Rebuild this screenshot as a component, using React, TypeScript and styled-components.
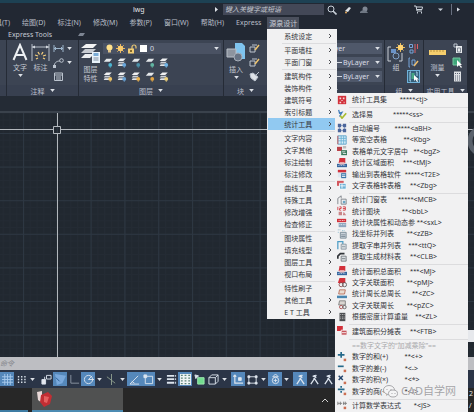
import React from "react";
import styled, { createGlobalStyle, css } from "styled-components";

const Global = createGlobalStyle`
  * { box-sizing: border-box; }
  html, body { margin: 0; padding: 0; background: #212830; }
  body, button, input, select {
    font-family: "Noto Sans", "Noto Sans CJK SC", sans-serif;
    font-size: 7px;
  }
  button { border: 0; padding: 0; margin: 0; background: none; color: inherit; cursor: pointer; }
  svg { display: block; flex: none; }
`;

const Shell = styled.div`
  position: relative;
  display: flex;
  flex-direction: column;
  min-height: 100vh;
  overflow: hidden;
  color: #c9ced6;
  background: #222833;
  border-top: 3px solid #1d4153;
`;

const TitleBar = styled.header`
  display: flex;
  align-items: center;
  height: 13px;
`;
const Side = styled.div`
  display: flex;
  align-items: center;
  width: 223px;
  padding-right: 4px;
`;
const DocName = styled.span`
  flex: 1;
  padding-left: 133px;
  font-size: 7px;
  line-height: 12px;
  color: #e2e5ea;
`;
const Search = styled.input`
  width: 101px;
  height: 11px;
  border: 0;
  padding: 0 2px;
  background: #434857;
  color: #d5d8de;
  font-style: italic;
  &::placeholder { color: #c3c7cf; opacity: 1; }
`;
const TitleTools = styled.div<{ $grow?: boolean }>`
  display: flex;
  align-items: center;
  gap: 7px;
  padding: 0 7px 0 3px;
  ${(p) => p.$grow && css`margin-left: auto; padding: 0 14px 0 0;`}
`;

const MenuBar = styled.nav`
  display: flex;
  align-items: center;
  height: 13px;
  gap: 12px;
  margin-left: -5px;
  white-space: nowrap;
`;
const MenuItem = styled.button`
  line-height: 11px;
  color: #b9bec8;
`;
const MenuRoot = styled.div`
  position: relative;
  margin-left: -6px;
`;
const OpenItem = styled.button`
  height: 12px;
  padding: 0 2px;
  background: #4b505d;
  color: #c9cdd5;
`;

const TabRow = styled.div`
  display: flex;
  align-items: center;
  height: 11px;
  gap: 26px;
  padding-left: 8px;
  line-height: 10px;
  color: #c5cad3;
`;

const Ribbon = styled.section`
  display: flex;
  gap: 1px;
  height: 56px;
  padding-right: 7px;
  background: #252b36;
`;
const Panel = styled.div<{ $w?: number }>`
  display: flex;
  flex-direction: column;
  background: #3c4453;
  ${(p) => (p.$w ? css`width: ${p.$w}px; flex: none;` : css`flex: 1;`)}
`;
const PanelBody = styled.div<{ $end?: boolean; $tight?: boolean }>`
  display: flex;
  flex: 1;
  gap: 3px;
  padding: 3px 4px 0 ${(p) => (p.$tight ? 2 : 5)}px;
  ${(p) => p.$end && css`justify-content: flex-end; padding-right: 2px;`}
`;
const PanelTitle = styled.button`
  display: flex;
  align-items: center;
  justify-content: center;
  gap: 5px;
  height: 11px;
  background: #384050;
  color: #b9bfca;
  white-space: nowrap;
`;
const Big = styled.button`
  display: flex;
  flex-direction: column;
  align-items: center;
  gap: 1px;
  line-height: 9px;
  white-space: nowrap;
  color: #c3c8d1;
`;
const Stack = styled.div`
  display: flex;
  flex-direction: column;
  gap: 3px;
`;
const Tool = styled.button<{ $on?: boolean }>`
  display: flex;
  align-items: center;
  gap: 3px;
  height: 11px;
  ${(p) => p.$on && css`background: #35607b; outline: 1px solid #6fb2da;`}
`;
const LayerTools = styled.div`
  display: grid;
  grid-template-columns: repeat(5, 14px);
  row-gap: 3px;
`;
const LayerBox = styled.button`
  display: flex;
  align-items: center;
  gap: 2px;
  height: 11px;
  width: 118px;
  padding: 0 2px;
  background: #4a5263;
  color: #d9dde4;
`;
const Push = styled.span`
  margin-left: auto;
`;
const Combo = styled.label`
  display: flex;
  align-items: center;
  width: 64px;
  height: 11px;
  padding-right: 2px;
  background: #4f586a;
`;
const Stroke = styled.i`
  width: 24px;
  border-top: 1px solid #d4d8df;
`;
const ComboSelect = styled.select`
  flex: 1;
  min-width: 0;
  height: 11px;
  padding: 0 0 0 1px;
  border: 0;
  appearance: none;
  background: none;
  color: #d9dde4;
`;

const DocStrip = styled.div`
  height: 17px;
  background: #242b35;
  border-bottom: 2px solid #3a424c;
`;
const Canvas = styled.main`
  position: relative;
  flex: 1;
  background: #212830;
`;
const Drawing = styled.svg`
  position: absolute;
  inset: 0;
  width: 100%;
  height: 100%;
`;
const CommandLine = styled.input`
  width: 100%;
  height: 13px;
  border: 0;
  padding: 0;
  background: #bdbec2;
  font-style: italic;
  &::placeholder { color: #85878c; opacity: 1; }
`;
const StatusBar = styled.div`
  display: flex;
  align-items: center;
  height: 18px;
  background: #2b3547;
`;
const Toggle = styled.button<{ $on?: boolean; $gap?: boolean }>`
  display: flex;
  align-items: center;
  justify-content: center;
  width: 14px;
  height: 14px;
  margin-left: ${(p) => (p.$gap ? 2 : 0)}px;
  background: ${(p) => (p.$on ? "#5588bb" : "transparent")};
`;
const Drop = styled.button`
  display: flex;
  justify-content: center;
  width: 9px;
`;
const TaskBar = styled.footer`
  display: flex;
  align-items: stretch;
  height: 24px;
  background: #272727;
`;
const StartApp = styled.button`
  width: 28px;
  margin-right: 4px;
  border-bottom: 2px solid #3e7ca3;
`;
const Task = styled.button`
  display: flex;
  align-items: center;
  width: 91px;
  padding-left: 4px;
  background: #505151;
  border-bottom: 2px solid #4c8bb2;
`;
const TrayButton = styled.button`
  margin-left: auto;
  margin-right: 145px;
`;

const menuSurface = css`
  margin: 0;
  list-style: none;
  background: #f1f1f2;
  color: #34353a;
  white-space: nowrap;
  z-index: 2;
`;
const Menu = styled.ul`
  ${menuSurface}
  position: absolute;
  left: 0;
  top: 12px;
  width: 70px;
  padding: 1px;
`;
const MenuEntry = styled.button<{ $on?: boolean }>`
  display: flex;
  align-items: center;
  justify-content: space-between;
  width: 100%;
  height: 12px;
  padding: 0 3px 0 16px;
  background: ${(p) => (p.$on ? "#91c9f1" : "none")};
`;
const Rule = styled.li<{ $h: number }>`
  height: ${(p) => p.$h}px;
  flex: none;
  &::before {
    content: "";
    display: block;
    height: ${(p) => (p.$h > 2 ? 2 : 1)}px;
    margin-left: 14px;
    border-bottom: 1px solid #dcdcde;
  }
`;
const SubMenu = styled.ul`
  ${menuSurface}
  position: absolute;
  left: 335px;
  top: 90px;
  bottom: 0;
  width: 133px;
  padding: 1px 0;
  display: flex;
  flex-direction: column;
`;
const SubItem = styled.li`
  flex: 1;
  min-height: 0;
  display: flex;
`;
const SubEntry = styled.button`
  display: flex;
  align-items: center;
  width: 100%;
  gap: 5px;
  padding-left: 2px;
  text-align: left;
`;
const Label = styled.span`
  display: flex;
  align-items: center;
  line-height: 11px;
  white-space: pre;
`;
const Stars = styled.span`
  font-family: "Liberation Sans", sans-serif;
  font-size: 8px;
`;
const Heading = styled.span`
  padding-left: 17px;
  line-height: 11px;
  color: #a9a9ac;
`;
const Watermark = styled.div`
  position: absolute;
  left: 383px;
  bottom: 13px;
  z-index: 3;
  display: flex;
  align-items: center;
  gap: 3px;
  font-size: 11px;
  line-height: 16px;
  color: #a3a3a6;
  text-shadow: 0 0 1px #fff;
  pointer-events: none;
  white-space: nowrap;
`;
const Clock = styled.div`
  position: absolute;
  left: 469px;
  bottom: 0;
  line-height: 12px;
  color: #e6e6e6;
`;
const EdgeButton = styled.button`
  position: absolute;
  left: 468px;
  bottom: 70px;
  width: 6px;
  height: 12px;
  background: #e6e8ec;
`;

const Caret = ({ side }: { side?: boolean }) => (
  <svg width="5" height="5" viewBox="0 0 5 5">
    <path d={side ? "M1 0l3 2.5L1 5z" : "M.2 1h4.6L2.5 4z"} fill="#dde1e7" />
  </svg>
);

const Sheets = ({ size = 11, mark = "#58a9c4", flat }: { size?: number; mark?: string; flat?: boolean }) => (
  <svg width={size} height={size} viewBox="0 0 12 12">
    {flat ? (
      <path d="M4 1h7L8 4.500H1z" fill="#e4e7ea" />
    ) : (
      <>
        <path d="M4 .5h6.500L7.500 3.500H.8z" fill="#f0f1f3" />
        <path d="M2.500 4.400h7L7.200 6.500H.8z" fill="#cdd1d7" />
        <path d="M2 7.400h7L7 9.500H.8z" fill="#dfe2e6" />
      </>
    )}
    <circle cx="8.700" cy="8.300" r="2.300" fill={mark} />
    <path d="M8.700 10v1.800" stroke={mark} />
  </svg>
);

const LayerProps = () => (
  <svg width="19" height="21" viewBox="0 0 19 21">
    <path d="M5 1h11l-4 4H0z" fill="#f2f3f4" />
    <path d="M4 6h11l-4 4H0z" fill="#c7cbd1" />
    <path d="M4 11h9l-4 4H0z" fill="#eceef0" />
    <rect x="11" y="9" width="8" height="11" fill="#e9f2fa" />
    <path d="M12.500 13h5v-3h-5z" fill="#79abd6" />
    <path d="M12.500 15h5M12.500 17h5" stroke="#7f8da0" />
  </svg>
);

const Bulb = () => (
  <svg width="9" height="10" viewBox="0 0 9 10">
    <circle cx="4.500" cy="3.500" r="3" fill="#ffe08a" />
    <path d="M3 6h3v2.500H3z" fill="#dfc38c" />
  </svg>
);
const Sun = () => (
  <svg width="9" height="9" viewBox="0 0 9 9">
    <path d="M4.500 0v9M0 4.500h9M1.300 1.300l6.400 6.400M7.700 1.300L1.300 7.700" stroke="#e9b45c" />
    <circle cx="4.500" cy="4.500" r="2.700" fill="#f9cc70" />
  </svg>
);
const Padlock = () => (
  <svg width="10" height="10" viewBox="0 0 10 10">
    <path d="M5 5V3a2 2 0 0 1 4 0v1.500" fill="none" stroke="#eac873" strokeWidth="1.200" />
    <rect x="1" y="4.500" width="6" height="5" fill="#f3cd73" />
    <rect x="3" y="6" width="2" height="2" fill="#82682e" />
  </svg>
);

const TextTool = () => (
  <svg width="16" height="19" viewBox="0 0 16 19">
    <path d="M1.500 17L8 2l6.500 15M4 12h8" fill="none" stroke="#edf0f3" strokeWidth="2" />
  </svg>
);
const DimBig = () => (
  <svg width="19" height="19" viewBox="0 0 19 19">
    <path d="M1 1v17M18 1v17M1 4h17" stroke="#b6bdc8" fill="none" />
    <path d="M1 4l3-1.500v3zM18 4l-3-1.500v3z" fill="#d4d9e0" />
    <path d="M5 16l2-1M4 12l3 1M7 9l1.500 2.500M12 9l-1.500 2.500M15 12l-3 1M14 16l-2-1" stroke="#f4ce7c" strokeWidth="1.300" />
  </svg>
);
const SmallTool = ({ kind }: { kind: string }) => (
  <svg width="11" height="11" viewBox="0 0 11 11" fill="none" stroke="#bcc4cf">
    {kind === "dim" && <path d="M1 2v7M10 2v7M1 5.500h9M3 4L1.500 5.500 3 7M8 4l1.500 1.500L8 7" stroke="#9db5cc" />}
    {kind === "leader" && <><path d="M1 9.500C1.500 6 3 4 7 4" /><circle cx="8.500" cy="3.500" r="1.800" /><path d="M0 8h3v3H0z" fill="#bcc4cf" stroke="none" /></>}
    {kind === "table" && <><path d="M1.500 2h8v7.500h-8z" /><path d="M1.500 4h8M3 6h5M3 8h5" /></>}
    {kind === "edit" && <><path d="M1 4h5v5H1zM3 2h5" /><path d="M6 7l4-5" stroke="#f0c56e" strokeWidth="1.500" /></>}
    {kind === "tag" && <path d="M1 3l3-1 5 4-3 4-4-3zM6 5l4-4" fill="#dfe3e8" />}
    {kind === "group1" && <><path d="M1.500 1.500h3v3h-3zM2 7h3v3H2z" stroke="#77a5db" /><path d="M7 1v9M9.500 1v5" stroke="#db6068" /></>}
    {kind === "group2" && <><path d="M2 1H1v9h1M4 3h3v5H4z" stroke="#77a5db" /><path d="M6 9l4-5" stroke="#eebd6a" strokeWidth="1.500" /></>}
    {kind === "group3" && <><path d="M3 1H2v9h1M8 1h1v4" stroke="#a9d6ef" /><path d="M3.500 2h3v6h-3z" fill="#48a884" stroke="none" /><path d="M6 4v6l1.500-1.500L9 11l1-.5-1-2h2z" fill="#fff" stroke="none" /></>}
    {kind === "pick" && <><path d="M2 1h3v3H2z" /><path d="M4 3h6v7H4z" fill="#e8ebee" stroke="none" /><path d="M5.500 5v4h3V5z" stroke="#858d98" /></>}
    {kind === "select" && <><path d="M1 1h7v7H1z" fill="#3fa67a" stroke="#74c6a1" /><path d="M5 3v7l2-2 2 3 1-1-2-2h2z" fill="#fff" stroke="none" /></>}
    {kind === "calc" && <><path d="M2 .5h7v10H2z" fill="#dde0e4" stroke="none" /><path d="M3 2.500h5M3 5h5M3 7h5M3 9h5" stroke="#596170" strokeDasharray="1 1" /></>}
  </svg>
);

const Insert = () => (
  <svg width="20" height="21" viewBox="0 0 20 21">
    <path d="M9 0h7l3 3v13H9z" fill="#7fc4ef" />
    <path d="M1 6h9v8H1z" fill="#8d949f" stroke="#b9bfc8" />
    <circle cx="12" cy="14" r="4" fill="#687384" stroke="#a6aeb9" />
  </svg>
);
const GroupIcon = () => (
  <svg width="18" height="19" viewBox="0 0 18 19" fill="none">
    <path d="M4 4H1v14h3M12 18h3v-8" stroke="#c9ced6" />
    <rect x="4" y="6" width="5" height="4" fill="#6b93c8" />
    <circle cx="9" cy="13" r="3" stroke="#7fa1c8" />
    <path d="M13.500 0v9M9 4.500h9M10.500 1.500l6 6M16.500 1.500l-6 6" stroke="#e8b95b" />
    <circle cx="13.500" cy="4.500" r="2.700" fill="#ffd575" />
  </svg>
);
const Ruler = () => (
  <svg width="17" height="19" viewBox="0 0 17 19">
    <rect y="7" width="17" height="5" fill="#f5ce6d" />
    <path d="M2 7v2M5 7v2M8 7v2M11 7v2M14 7v2" stroke="#bd9540" />
  </svg>
);

const statusShapes: Record<string, React.ReactNode> = {
  grid: <path d="M3 0v12M6 0v12M9 0v12M0 3h12M0 6h12M0 9h12" stroke="#a9cbee" />,
  dots: <path d="M2 3h9M2 6h9M2 9h9" strokeDasharray="1.500 2" strokeWidth="1.500" />,
  infer: <><path d="M6 1.500h5v4H6z" /><path d="M1 6h4v5H1z" fill="#e6e9ee" /><path d="M4 6V3" /></>,
  dyn: <><path d="M0 0l12 2-4 8-6 2z" fill="#7aa9dc" stroke="none" /><path d="M1 4l4 4" stroke="#24588f" /></>,
  ortho: <path d="M2 1v9h9" stroke="#8d97a5" />,
  polar: <><circle cx="6" cy="6" r="4.500" /><path d="M6 6h6M6 6l4-4" /></>,
  iso: <path d="M1 3l9 7M6 0v12" stroke="#8fa08f" />,
  track: <path d="M1 11h10M1 11L10 2M3 8l3 2" />,
  snap: <><path d="M2.500 2.500h8v8h-8z" /><path d="M1 1h3v3H1z" fill="#d4e5f6" /></>,
  weight: <path d="M1 2h10M1 5.500h10M1 9.500h10" strokeWidth="2" strokeDasharray="8 1" />,
  checker: <><path d="M0 0h12v12H0z" fill="#eef3f4" stroke="none" /><path d="M1 1.500h10M1 4.500h10M1 7.500h10M1 10.500h10" stroke="#5d8479" strokeWidth="1.500" strokeDasharray="2 2" /></>,
  cycle: <><path d="M4 4h7v7H4z" fill="#72dd8f" stroke="#9fe9b2" /><path d="M1 1l4 1-3 3z" fill="#dfe5ec" /></>,
  cube: <path d="M1 4h7v7H1zM1 4l3-3h7v7l-3 3M8 4l3-3" />,
  ucs: <><path d="M2 1v9h9M2 1L.5 3M2 1l1.500 2" strokeWidth="1.300" /><path d="M6 4h3v3H6z" fill="#dceaf7" /></>,
  box: <><path d="M2 3h8v7H2z" /><path d="M1 2h2v2H1zM9 2h2v2H9zM1 9h2v2H1zM9 9h2v2H9z" fill="#e6e9ee" /></>,
  gizmo: <><circle cx="6" cy="7" r="3.500" /><path d="M6 0l3 3H3zM6 5v4M4 7h4" /></>,
  anno: <path d="M6 1v4L2 11M6 5l4 6M4 2l4 2M8 1L5 5" strokeWidth="1.400" />,
};

const StatusIcon = ({ kind }: { kind: string }) => (
  <svg width="11" height="11" viewBox="0 0 12 12" fill="none" stroke="#dce4ed">
    {statusShapes[kind]}
  </svg>
);

const status: [string, string, boolean?, boolean?, boolean?][] = [
  ["grid", "栅格", true],
  ["dots", "捕捉", false, true],
  ["infer", "推断约束", false, false, true],
  ["dyn", "动态输入", true],
  ["ortho", "正交"],
  ["polar", "极轴追踪", true, true],
  ["iso", "等轴测草图", false, true],
  ["track", "对象捕捉追踪", true],
  ["snap", "对象捕捉", true, true],
  ["weight", "线宽"],
  ["checker", "透明度", true],
  ["cycle", "选择循环"],
  ["cube", "三维对象捕捉", false, true],
  ["ucs", "动态 UCS", true, false, true],
  ["box", "选择过滤", false, true],
  ["gizmo", "小控件", true, true],
  ["anno", "注释可见性", true, false, true],
  ["anno", "自动缩放"],
  ["anno", "注释比例"],
];

const menuGroups = [
  ["系统设定"],
  ["平面墙柱", "平面门窗"],
  ["建筑构件", "装饰构件", "建筑符号", "索引标题", "统计工具"],
  ["文字内容", "文字其他", "标注绘制", "标注修改"],
  ["曲线工具", "特殊工具", "修改增强", "检查修正"],
  ["图块属性", "填充线型", "图层工具", "视口布局"],
  ["特性刷子", "其他工具", " E T 工具"],
];

type Cmd = { icon: string; name: string; pad: number; stars: number; code: string };
const c = (icon: string, name: string, pad: number, stars: number, code: string): Cmd => ({ icon, name, pad, stars, code });
const cmdGroups: Cmd[][] = [
  [c("set", "统计工具集", 7, 5, "<tj>")],
  [c("pick", "选择易", 11, 5, "<ss>")],
  [
    c("nodes", "自动编号", 8, 5, "<aBH>"),
    c("table", "等宽空表格", 9, 2, "<Kbg>"),
    c("cell", "表格单元文字居中", 3, 2, "<bgZ>"),
    c("area", "统计区域面积", 5, 3, "<tMJ>"),
    c("export", "输出到表格软件", 2, 5, "<T2E>"),
    c("swap", "文字表格转表格", 5, 2, "<Zbg>"),
  ],
  [
    c("door", "统计门窗表", 6, 5, "<MCB>"),
    c("num", "统计图块", 12, 2, "<bbL>"),
    c("numTable", "统计块属性和动态参", 1, 2, "<sxL>"),
    c("coord", "找坐标并列表", 7, 2, "<zZB>"),
    c("blueList", "提取字串并列表", 4, 3, "<ttQ>"),
    c("list", "提取生成材料表", 5, 2, "<CLB>"),
  ],
  [
    c("area", "统计面积总面积", 5, 3, "<MJ>"),
    c("link", "文字关联面积", 7, 2, "<pMJ>"),
    c("perim", "统计周长总周长", 6, 2, "<ZC>"),
    c("linkGray", "文字关联周长", 7, 2, "<pZC>"),
    c("calc", "根据密度计算重量", 4, 2, "<ZL>"),
  ],
  [c("share", "建筑面积分摊表", 5, 2, "<FTB>")],
  [
    c("", "==数字文字的“加减乘除”==", 0, 0, ""),
    c("plus", "数字的和(+)", 9, 2, "<+>"),
    c("minus", "数字的差(-)", 10, 1, "<->"),
    c("times", "数字的积(×)", 9, 1, "<*>"),
    c("divide", "数字的商(÷)", 9, 1, "</>"),
  ],
  [c("expr", "计算数学表达式", 7, 1, "<JS>")],
];

const red = "#d2303a";
const cmdShapes: Record<string, React.ReactNode> = {
  set: <><path d="M1 1h10v10H1z" fill={red} /><path d="M3 3h2v2H3zM7 3h2v2H7zM5 6h2v1H5zM3 8h2v2H3zM8 8h1v2H8z" fill="#f6d7d8" /></>,
  pick: <><path d="M2 1l1 4 3-1-3 5" stroke="#3a77b8" fill="none" strokeWidth="1.500" /><path d="M4 8l2 3 5-6" stroke="#a6bb2f" fill="none" strokeWidth="2" /></>,
  nodes: <><path d="M2 3h8M2 9h8M3 2v8M9 2v8" stroke="#8aa0c6" /><path d="M1 1h4v4H1zM7 1h4v4H7zM1 7h4v4H1zM7 7h4v4H7z" fill="#4c669b" /></>,
  table: <><path d="M1 1h10v10H1z" fill="#d9eef9" stroke="#4c9ac4" /><path d="M1 4h10M1 7h10M5 1v10M8 1v10" stroke="#64aed2" /><path d="M1 1v10" stroke="#d9534f" /></>,
  cell: <><path d="M0 1h6v5H0z" fill="#bb4148" /><path d="M5 5h7v6H5z" fill="#39795c" /><path d="M1 8l4 1M6 7h4M7 9h4" stroke="#eee" /><path d="M7 0h4v3H7z" fill="#bbb" /></>,
  area: <><path d="M3 0h7v6H2z" fill={red} /><path d="M0 7h12v4H0z" fill="#35669f" /><path d="M3 5h6v3H3z" fill="#e8bfc2" /><path d="M1 9h10" stroke="#ccd9e8" strokeDasharray="1 1" /></>,
  export: <><path d="M1 1h10v9H1z" fill="#dfe6ee" /><path d="M1 1h10v3H1z" fill={red} /><path d="M5 5h6v6H5z" fill="#3c76a8" /><path d="M6 7h4M6 9h4" stroke="#fff" /></>,
  swap: <><path d="M0 1h8v6H0z" fill="#d3575d" /><path d="M3 4h8v7H3z" fill="#6eb1d6" stroke="#fff" /><path d="M4 7h6M6 5v5" stroke="#fff" /></>,
  door: <><path d="M1 11V4l4-3v3M5 11V5h6v6z" fill="none" stroke="#737981" /><path d="M7 7h3v3H7z" fill="#6ba5c4" /></>,
  num: <><path d="M1 1v4M3 1h2v2H3v2h2M7 1h3v4H7M7 3h3" stroke={red} fill="none" /><path d="M2 7h4v4H2zM8 7l3 4H7z" fill="#c98588" /></>,
  numTable: <><path d="M0 1h11v4H0z" fill={red} /><path d="M2 6h9v5H2z" fill="#8ea6be" /><path d="M2 3h8M3 8h8" stroke="#fff" strokeDasharray="1 1" /></>,
  coord: <><path d="M1 1h3M1 4h2M6 2h4" stroke="#6dabc4" strokeDasharray="1 1" /><path d="M4 4h7v7H4z" fill="#c9d1d8" stroke="#758592" /><path d="M5 7h5M5 9h5" stroke="#758592" /></>,
  blueList: <><path d="M1 11V2h6v3" fill="none" stroke="#4e9ec6" strokeWidth="1.500" /><path d="M5 5h6v6H5z" fill="#d8dde1" stroke="#84919b" /><path d="M6 8h4" stroke="#84919b" /></>,
  list: <><path d="M1 8V5l3-3h5" fill="none" stroke="#313438" strokeWidth="2" /><path d="M5 5h6v6H5z" fill="#d8dde1" stroke="#6f7378" /><path d="M6 8h4" stroke="#6f7378" /></>,
  link: <><path d="M3 0h7v6H1z" fill={red} /><circle cx="5" cy="8" r="2.500" fill="none" stroke="#844" /><circle cx="9" cy="8" r="2.500" fill="none" stroke="#555" /></>,
  perim: <><path d="M3 1h7l-1 5H2z" fill="#e9ddd2" stroke="#b3654f" /><path d="M0 8h12v3H0z" fill="#4a87b0" /></>,
  linkGray: <><path d="M3 1h7v5H2z" fill="#d9d5d0" stroke="#777" /><circle cx="5" cy="8.500" r="2" fill="none" stroke="#a44" /><circle cx="9" cy="8.500" r="2" fill="none" stroke="#555" /></>,
  calc: <><path d="M3 1h7v10H3z" fill="#4d4f52" /><path d="M4 3h5M4 6h5M4 8h5" stroke="#d7d7d7" strokeDasharray="1 1" /></>,
  share: <><path d="M0 0h7v6H0z" fill={red} /><path d="M5 5h7v6H5z" fill="#c5565c" stroke="#fff" /><path d="M6 8h5" stroke="#fff" /></>,
  plus: <path d="M5 0v7M1 3.500h8" stroke="#25698a" strokeWidth="2" />,
  minus: <path d="M1 4h7" stroke="#25698a" strokeWidth="2" />,
  times: <path d="M2 1l5 5M7 1L2 6" stroke="#24466f" strokeWidth="1.800" />,
  divide: <path d="M1 4h8M5 0v2M5 6v2" stroke="#25698a" strokeWidth="2" />,
  expr: <path d="M1 2v4M4 2v4M1 4h5M8 2v4M10 2v4M7 4h5" stroke="#777" />,
};
const dotted = ["plus", "minus", "times", "divide", "expr"];
const CmdIcon = ({ kind }: { kind: string }) => (
  <svg width="10" height="10" viewBox="0 0 12 12">
    {cmdShapes[kind]}
    {dotted.includes(kind) && <path d="M8 8h3v3H8z" fill="#cc6f52" />}
  </svg>
);

const Chevron = () => (
  <svg width="5" height="6" viewBox="0 0 5 6">
    <path d="M1 1l2 2-2 2" fill="none" stroke="#4a4b50" />
  </svg>
);

const Title = ({ children }: { children: string }) => (
  <PanelTitle>{children}<Caret /></PanelTitle>
);

export default function App() {
  return (
    <Shell>
      <Global />
      <TitleBar>
        <Side><DocName>lwg</DocName><Caret side /></Side>
        <Search aria-label="搜索" placeholder="键入关键字或短语" />
        <TitleTools>
          <svg width="10" height="10" viewBox="0 0 10 10" fill="none" stroke="#c9d0d9">
            <circle cx="4" cy="4" r="3" /><path d="M6 6l3.500 3.500" strokeWidth="1.600" />
          </svg>
          <svg width="8" height="8" viewBox="0 0 8 8"><path d="M1 5l4-4 2 1-3 4z" fill="#dfe3e8" /><circle cx="2" cy="6.500" r="1" fill="#e6aa5b" /></svg>
          <svg width="10" height="8" viewBox="0 0 10 8"><circle cx="6" cy="3" r="2.500" fill="#7f8793" /><path d="M1 6c2-3 7-2 8 1H1z" fill="#6f7783" /></svg>
        </TitleTools>
        <TitleTools $grow>
          <svg width="9" height="9" viewBox="0 0 9 9" fill="none" stroke="#c9d0d9"><path d="M0 1h2l1 5h5M2 2h6.500L8 4.500H3" /><path d="M3 7h1v1.500H3zM7 7h1v1.500H7z" fill="#c9d0d9" stroke="none" /></svg>
          <svg width="14" height="5" viewBox="0 0 14 5"><path d="M8 1.500h5L10.500 4z" fill="#c9d0d9" /></svg>
          <svg width="9" height="11" viewBox="0 0 9 11"><path d="M.5 0v11" stroke="#687080" /><path d="M6 3.500l3 2-3 2z" fill="#d9dde4" /></svg>
        </TitleTools>
      </TitleBar>
      <MenuBar>
        {["具(T)", "绘图(D)", "标注(N)", "修改(M)", "参数(P)", "窗口(W)", "帮助(H)", "Express"].map((m) => (
          <MenuItem key={m}>{m}</MenuItem>
        ))}
        <MenuRoot>
          <OpenItem aria-expanded="true">源泉设计</OpenItem>
          <Menu>
            {menuGroups.map((g, i) => (
              <React.Fragment key={i}>
                {i > 0 && <Rule $h={2} />}
                {g.map((name) => (
                  <li key={name}><MenuEntry $on={name === "统计工具"}>{name}<Chevron /></MenuEntry></li>
                ))}
              </React.Fragment>
            ))}
          </Menu>
        </MenuRoot>
      </MenuBar>
      <TabRow>
        <span>Express Tools</span>
        <svg width="7" height="5" viewBox="0 0 7 5"><path d="M0 4l2-3h5L5 4z" fill="#7d8592" /></svg>
      </TabRow>
      <Ribbon>
        <Panel $w={6}><PanelBody /><PanelTitle aria-label="绘图" /></Panel>
        <Panel $w={71}>
          <PanelBody>
            <Big><TextTool />文字<Caret /></Big>
            <Big><DimBig />标注</Big>
            <Stack>
              <Tool aria-label="线性"><SmallTool kind="dim" /><Caret /></Tool>
              <Tool aria-label="引线"><SmallTool kind="leader" /><Caret /></Tool>
              <Tool aria-label="表格"><SmallTool kind="table" /></Tool>
            </Stack>
          </PanelBody>
          <Title>注释</Title>
        </Panel>
        <Panel $w={144}>
          <PanelBody $tight>
            <Big><LayerProps /><span>图层<br />特性</span></Big>
            <Stack>
              <LayerBox><Bulb /><Sun /><Padlock />
                <svg width="9" height="9" viewBox="0 0 9 9"><path d="M1 1h7v7H1z" fill="#fff" /></svg>
                0<Push><Caret /></Push>
              </LayerBox>
              <LayerTools>
                {[["#4bb3cf", 1], ["#6aa8dd", 0], ["#4a90a8", 1], ["#61b5a1", 1], ["#71b6e8", 0], ["#eec469", 0], ["#69a2d4", 0], ["#eab350", 0], ["#e0a343", 1], ["#efd27c", 0]].map(([m, f], i) => (
                  <Tool key={i} aria-label={`图层工具 ${i + 1}`}><Sheets mark={m as string} flat={!!f} size={10} /></Tool>
                ))}
              </LayerTools>
            </Stack>
          </PanelBody>
          <Title>图层</Title>
        </Panel>
        <Panel $w={43}>
          <PanelBody $tight>
            <Big><Insert />插入<Caret /></Big>
            <Stack>
              <Tool aria-label="创建"><SmallTool kind="edit" /></Tool>
              <Tool aria-label="编辑"><SmallTool kind="edit" /></Tool>
              <Tool aria-label="属性"><SmallTool kind="tag" /></Tool>
            </Stack>
          </PanelBody>
          <Title>块</Title>
        </Panel>
        <Panel>
          <PanelBody $end>
            <Stack>
              <Combo><ComboSelect aria-label="颜色"><option>   ByLayer</option></ComboSelect><Caret /></Combo>
              <Combo><Stroke /><ComboSelect aria-label="线宽"><option>ByLayer</option></ComboSelect><Caret /></Combo>
              <Combo><Stroke /><ComboSelect aria-label="线型"><option>ByLayer</option></ComboSelect><Caret /></Combo>
            </Stack>
          </PanelBody>
          <Title>特性</Title>
        </Panel>
        <Panel $w={38}>
          <PanelBody $tight>
            <Big><GroupIcon />组</Big>
            <Stack>
              <Tool aria-label="解除编组"><SmallTool kind="group1" /></Tool>
              <Tool aria-label="组编辑"><SmallTool kind="group2" /></Tool>
              <Tool $on aria-label="组选择"><SmallTool kind="group3" /></Tool>
            </Stack>
          </PanelBody>
          <Title>组</Title>
        </Panel>
        <Panel $w={43}>
          <PanelBody>
            <Big><Ruler />测量<Caret /></Big>
            <Push>
              <Stack>
                <Tool aria-label="快速选择"><SmallTool kind="pick" /></Tool>
                <Tool aria-label="全部选择"><SmallTool kind="select" /></Tool>
                <Tool aria-label="计算器"><SmallTool kind="calc" /></Tool>
              </Stack>
            </Push>
          </PanelBody>
          <Title>实用工具</Title>
        </Panel>
      </Ribbon>
      <DocStrip />
      <Canvas>
        <Drawing>
          <defs>
            <pattern id="minor" width="6.76" height="6.72" patternUnits="userSpaceOnUse" x="23" y="20">
              <path d="M.5 0v7M0 .5h7" stroke="#242b34" fill="none" />
            </pattern>
            <pattern id="major" width="33.8" height="33.6" patternUnits="userSpaceOnUse" x="23" y="20">
              <path d="M.5 0v34M0 .5h34" stroke="#2d3742" fill="none" />
            </pattern>
          </defs>
          <rect width="100%" height="100%" fill="url(#minor)" />
          <rect width="100%" height="100%" fill="url(#major)" />
          <path d="M0 16.500h53M61 16.500h2000M57.500 0v13M57.500 20v2000" stroke="#b3b8bd" />
          <path d="M53.500 13.500h7v7h-7z" fill="none" stroke="#b3b8bd" />
          <circle cx="483" cy="28" r="13" fill="none" stroke="#59616b" strokeWidth="5" />
        </Drawing>
      </Canvas>
      <CommandLine aria-label="命令" placeholder="命令" />
      <StatusBar>
        {status.map(([kind, name, on, drop, gap], i) => (
          <React.Fragment key={i}>
            <Toggle $on={on} $gap={gap} aria-label={name}><StatusIcon kind={kind} /></Toggle>
            {drop && <Drop aria-label={`${name}选项`}><Caret /></Drop>}
          </React.Fragment>
        ))}
      </StatusBar>
      <TaskBar>
        <StartApp aria-label="文件" />
        <Task aria-label="AutoCAD">
          <svg width="17" height="17" viewBox="0 0 17 17">
            <path d="M1 1l5-1v12l-4-3z" fill="#e9d9d8" />
            <path d="M5 4l7-3 4 4-2 8-6 3-4-5z" fill="#c22e33" />
            <path d="M8 5l5 1-2 6-3-1z" fill="#e6605f" />
          </svg>
        </Task>
        <TrayButton aria-label="显示隐藏的图标">
          <svg width="8" height="6" viewBox="0 0 8 6"><path d="M1 5l3-3 3 3" fill="none" stroke="#d4d4d4" /></svg>
        </TrayButton>
      </TaskBar>
      <EdgeButton aria-label="自定义" />
      <Clock>2<br />/</Clock>
      <SubMenu>
        {cmdGroups.map((g, i) => (
          <React.Fragment key={i}>
            {i > 0 && <Rule $h={3} />}
            {g.map((item) => (
              <SubItem key={item.name}>
                {item.icon ? (
                  <SubEntry>
                    <CmdIcon kind={item.icon} />
                    <Label>{item.name + " ".repeat(item.pad)}<Stars>{"*".repeat(item.stars)}</Stars>{item.code}</Label>
                  </SubEntry>
                ) : (
                  <Heading>{item.name}</Heading>
                )}
              </SubItem>
            ))}
          </React.Fragment>
        ))}
      </SubMenu>
      <Watermark>
        <svg width="15" height="13" viewBox="0 0 15 13" fill="#f4f4f5" stroke="#a9a9ac">
          <ellipse cx="6" cy="5" rx="5.500" ry="4.500" /><ellipse cx="10" cy="8.500" rx="4.500" ry="3.500" />
          <path d="M4 4v1M8 4v1M9 8v1M12 8v1" />
        </svg>
        CAD自学网
      </Watermark>
    </Shell>
  );
}
